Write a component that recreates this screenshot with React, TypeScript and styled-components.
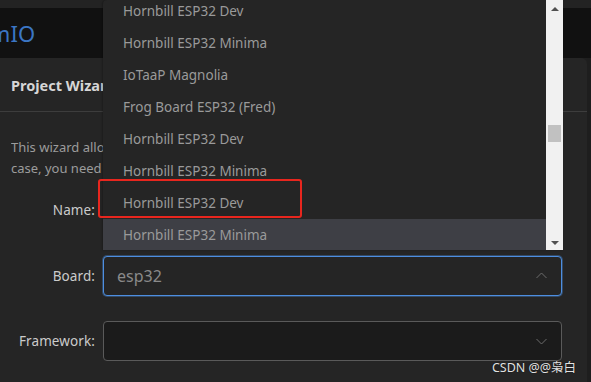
import React from 'react';
import styled, { createGlobalStyle } from 'styled-components';

const GlobalStyle = createGlobalStyle`
  html, body {
    margin: 0;
    padding: 0;
    background: #1f1f1f;
    font-family: "Noto Sans", "Open Sans", sans-serif;
  }
`;

const boards = [
  'Hornbill ESP32 Dev',
  'Hornbill ESP32 Minima',
  'IoTaaP Magnolia',
  'Frog Board ESP32 (Fred)',
  'Hornbill ESP32 Dev',
  'Hornbill ESP32 Minima',
  'Hornbill ESP32 Dev',
  'Hornbill ESP32 Minima'
];

const Page = styled.div`
  position: relative;
  width: 591px;
  height: 382px;
  overflow: hidden;
  display: flex;
  flex-direction: column;
`;

const TopStrip = styled.div`
  height: 8px;
  background: #232323;
`;

const Header = styled.div`
  height: 50px;
  background: #111111;
  display: flex;
  align-items: center;
  overflow: hidden;
`;

const Logo = styled.span`
  margin-left: -81px;
  font-size: 22px;
  color: #3b76c4;
  letter-spacing: 0.2px;
`;

const Main = styled.div`
  flex: 1;
  display: flex;
`;

const Modal = styled.div`
  width: 587px;
  flex: none;
  background: #252525;
  border-top-right-radius: 6px;
  display: flex;
  flex-direction: column;
`;

const ModalHeader = styled.div`
  height: 53px;
  padding: 0 11px;
  display: flex;
  align-items: center;
  justify-content: space-between;
  border-bottom: 1px solid #3d3d3d;
`;

const Title = styled.h2`
  margin: 0;
  font-size: 14.5px;
  font-weight: 700;
  color: #d6d6d6;
`;

const Close = styled.span`
  margin-right: 12px;
  color: #6a6a6a;
  font-size: 16px;
`;

const ModalBody = styled.div`
  padding: 25px 25px 0 11px;
`;

const Description = styled.p`
  margin: 0 0 11px;
  font-size: 13px;
  line-height: 21px;
  color: #9c9c9c;
  white-space: nowrap;
  overflow: hidden;
`;

const Form = styled.div`
  display: flex;
  flex-direction: column;
  gap: 25.5px;
`;

const Row = styled.div`
  display: grid;
  grid-template-columns: 84px 1fr;
  column-gap: 8px;
  align-items: center;
`;

const Label = styled.label`
  text-align: right;
  font-size: 13.5px;
  color: #cbcbcb;
  letter-spacing: 0.1px;
`;

const Select = styled.div<{ $focused?: boolean; $dark?: boolean }>`
  height: 40px;
  box-sizing: border-box;
  border-radius: 4px;
  border: 1px solid ${p => (p.$focused ? '#4d8ee0' : '#5a5a5a')};
  box-shadow: ${p => (p.$focused ? '0 0 0 1px rgba(77,142,224,0.35)' : 'none')};
  background: ${p => (p.$dark ? '#1b1b1b' : '#252525')};
  display: flex;
  align-items: center;
  justify-content: space-between;
  padding: 0 14px 0 13px;
`;

const Value = styled.span`
  font-size: 16px;
  color: #8a8a8a;
`;

const Chevron = ({ up }: { up?: boolean }) => (
  <svg width="11" height="7" viewBox="0 0 11 7" fill="none">
    <path
      d={up ? 'M0.5 6 L5.5 1 L10.5 6' : 'M0.5 1 L5.5 6 L10.5 1'}
      stroke="#6c6c6c"
      strokeWidth="1"
    />
  </svg>
);

const Side = styled.div`
  flex: 1;
  background: #1e1e1e;
`;

const Dropdown = styled.div`
  position: absolute;
  left: 103px;
  top: 0;
  width: 460px;
  height: 250px;
  display: flex;
  background: #252525;
  border-top-left-radius: 4px;
  box-shadow: -1px 0 2px rgba(0, 0, 0, 0.25);
`;

const List = styled.div`
  flex: 1;
  overflow: hidden;
`;

const Items = styled.div`
  margin-top: -5px;
`;

const Item = styled.div<{ $active?: boolean }>`
  height: 32px;
  display: flex;
  align-items: center;
  padding-left: 20px;
  font-size: 13.5px;
  color: #9a9a9a;
  background: ${p => (p.$active ? '#3e3f45' : 'transparent')};
`;

const Scrollbar = styled.div`
  width: 17px;
  background: #f1f1f1;
  display: flex;
  flex-direction: column;
  align-items: center;
  justify-content: space-between;
  padding: 7px 0 5px;
  box-sizing: border-box;
  position: relative;
`;

const Arrow = styled.div<{ $down?: boolean }>`
  width: 0;
  height: 0;
  border-left: 4px solid transparent;
  border-right: 4px solid transparent;
  ${p =>
    p.$down
      ? 'border-top: 4px solid #505050;'
      : 'border-bottom: 4px solid #505050;'}
`;

const Thumb = styled.div`
  position: absolute;
  left: 2px;
  top: 125px;
  width: 13px;
  height: 17px;
  background: #c1c1c1;
`;

const Highlight = styled.div`
  position: absolute;
  left: 98px;
  top: 179px;
  width: 204px;
  height: 39px;
  box-sizing: border-box;
  border: 2px solid #e8261e;
  border-radius: 3px;
`;

const Watermark = styled.span`
  position: absolute;
  right: 15px;
  bottom: 6px;
  font-family: "Noto Sans", "Noto Sans CJK SC", sans-serif;
  font-size: 12.5px;
  color: #e2e2e2;
  text-shadow: 0 0 1px #000;
`;

export default function App() {
  return (
    <>
      <GlobalStyle />
      <Page>
        <TopStrip />
        <Header>
          <Logo>PlatformIO</Logo>
        </Header>
        <Main>
          <Modal>
            <ModalHeader>
              <Title>Project Wizard</Title>
              <Close>✕</Close>
            </ModalHeader>
            <ModalBody>
              <Description>
                This wizard allows you to create new PlatformIO project or update existing. In the last
                <br />
                case, you need to uncheck "Use default location" and specify path to existing project.
              </Description>
              <Form>
                <Row>
                  <Label>Name:</Label>
                  <Select />
                </Row>
                <Row>
                  <Label>Board:</Label>
                  <Select $focused>
                    <Value>esp32</Value>
                    <Chevron up />
                  </Select>
                </Row>
                <Row>
                  <Label>Framework:</Label>
                  <Select $dark>
                    <Value />
                    <Chevron />
                  </Select>
                </Row>
              </Form>
            </ModalBody>
          </Modal>
          <Side />
        </Main>
        <Dropdown>
          <List>
            <Items>
              {boards.map((b, i) => (
                <Item key={i} $active={i === boards.length - 1}>
                  {b}
                </Item>
              ))}
            </Items>
          </List>
          <Scrollbar>
            <Arrow />
            <Thumb />
            <Arrow $down />
          </Scrollbar>
        </Dropdown>
        <Highlight />
        <Watermark>CSDN @@枭白</Watermark>
      </Page>
    </>
  );
}
